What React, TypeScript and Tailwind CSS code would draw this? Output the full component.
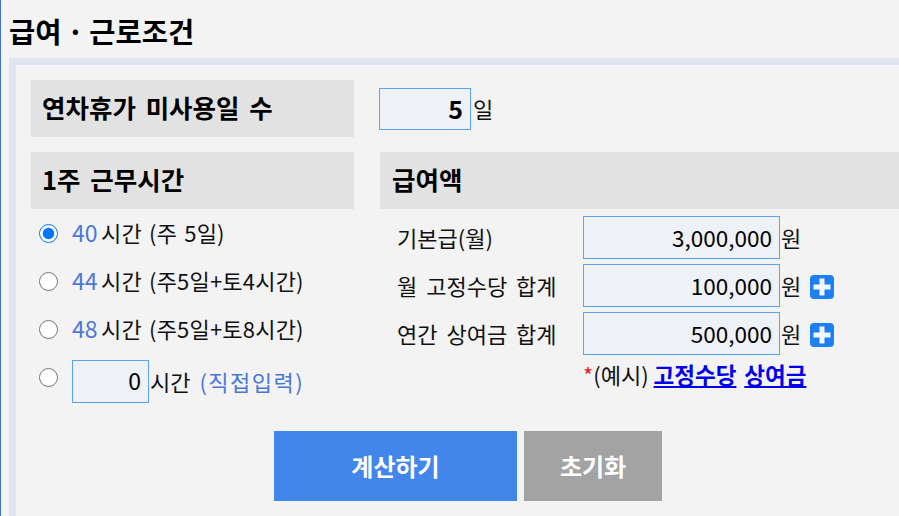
const font = { fontFamily: '"Noto Sans CJK KR", "Open Sans", sans-serif' };

const hourOptions = [
  { hours: "40", note: "(주 5일)", checked: true },
  { hours: "44", note: "(주5일+토4시간)", checked: false },
  { hours: "48", note: "(주5일+토8시간)", checked: false },
];

const payRows = [
  { label: "기본급(월)", value: "3,000,000", plus: false },
  { label: "월 고정수당 합계", value: "100,000", plus: true },
  { label: "연간 상여금 합계", value: "500,000", plus: true },
];

function PlusIcon() {
  return (
    <svg className="w-6 h-6 shrink-0 mt-[2px]" viewBox="0 0 24 24">
      <rect x="0" y="0" width="24" height="24" rx="4" fill="#1f7ff0" />
      <path d="M9.5 3.5h5v6h6v5h-6v6h-5v-6h-6v-5h6z" fill="#f2f6fd" />
    </svg>
  );
}

function NumberBox({ value, className }: { value: string; className: string }) {
  return (
    <input
      readOnly
      value={value}
      className={`border border-[#5aa2f5] bg-[#eef1f6] text-right text-black outline-none pr-[7px] pb-[2px] ${className}`}
    />
  );
}

export default function App() {
  return (
    <div style={font} className="w-[899px] h-[516px] overflow-hidden bg-[#f3f3f3] border-l border-[#4472c4] text-[#111] text-[22px] [word-spacing:4px]">
      <h2 className="h-[58px] pl-[8px] pt-[11px] text-[28.5px] leading-[40px] font-bold text-black [word-spacing:-1px]">급여 · 근로조건</h2>
      <div className="ml-[8px] w-[960px] h-[500px] border-[7px] border-[#e1e5f2] pl-[15px] pt-[15px]">
        <div className="flex items-center h-[57px]">
          <div className="w-[323px] h-[57px] bg-[#e2e2e2] flex items-center pl-[11px] pb-[2px] text-[25.5px] font-bold text-black">
            연차휴가 미사용일 수
          </div>
          <NumberBox value="5" className="ml-[25px] w-[92px] h-[42px] text-[25px] font-bold" />
          <span className="ml-[2px]">일</span>
        </div>

        <div className="flex mt-[15px]">
          <div className="w-[323px]">
            <div className="h-[57px] bg-[#e2e2e2] flex items-center pl-[11px] pb-[2px] text-[25.5px] font-bold text-black">
              1주 근무시간
            </div>
            <div className="flex flex-col">
              {hourOptions.map((o) => (
                <label key={o.hours} className="h-[48px] flex items-center pl-[8px]">
                  <input type="radio" name="hours" readOnly checked={o.checked} className="w-[19px] h-[19px] m-0 accent-[#0075ff]" />
                  <span className="ml-[14px] w-[29px] pb-[2px] text-[23px] text-[#4a78d8]">{o.hours}</span>
                  <span className="pb-[2px] tracking-[0.2px] [word-spacing:2px]">시간 {o.note}</span>
                </label>
              ))}
              <label className="h-[48px] flex items-center pl-[8px] pt-[8px]">
                <input type="radio" name="hours" readOnly checked={false} className="w-[19px] h-[19px] m-0 -mt-[8px] accent-[#0075ff]" />
                <NumberBox value="0" className="ml-[14px] w-[77px] h-[43px] text-[23px]" />
                <span className="ml-[1px]">시간 <span className="text-[#4a78d8] tracking-[1.5px]">(직접입력)</span></span>
              </label>
            </div>
          </div>

          <div className="ml-[26px] flex-1">
            <div className="h-[57px] bg-[#e2e2e2] flex items-center pl-[12px] pb-[2px] text-[25.5px] font-bold text-black">
              급여액
            </div>
            <div className="mt-[7px] flex flex-col gap-[5px]">
              {payRows.map((r) => (
                <div key={r.label} className="h-[43px] flex items-center">
                  <span className="w-[203px] pl-[17px] pb-[1px]">{r.label}</span>
                  <NumberBox value={r.value} className="w-[197px] h-[43px] text-[22.5px]" />
                  <span className="ml-[1px] w-[29px] pb-[1px]">원</span>
                  {r.plus && <PlusIcon />}
                </div>
              ))}
            </div>
            <div className="mt-[4px] ml-[203px] leading-[30px] [word-spacing:3px]">
              <span className="text-[#e8212b]">*</span>(예시){" "}
              <a href="#" className="-ml-[3px] text-[22.5px] font-bold text-[#0000ee] underline">고정수당</a>{" "}
              <a href="#" className="text-[22.5px] font-bold text-[#0000ee] underline">상여금</a>
            </div>
          </div>
        </div>

        <div className="mt-[30px] flex ml-[243px] gap-[7px]">
          <button className="w-[243px] h-[70px] bg-[#4285eb] text-white text-[24px] font-bold">계산하기</button>
          <button className="w-[138px] h-[70px] bg-[#a3a3a3] text-white text-[24px] font-bold">초기화</button>
        </div>
      </div>
    </div>
  );
}
